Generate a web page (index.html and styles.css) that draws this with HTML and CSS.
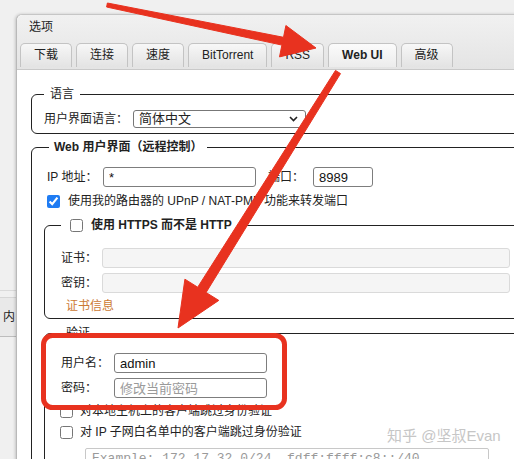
FILE: index.html
```html
<!DOCTYPE html>
<html lang="zh-CN">
<head>
    <meta charset="UTF-8">
    <meta name="viewport" content="width=device-width, initial-scale=1.0">
    <title>选项</title>
    <link rel="stylesheet" href="styles.css">
</head>
<body>
    <div class="desk">
        <div class="side">
            <div class="side-bar"><span>内</span></div>
        </div>

        <div class="win">
            <div class="head">
                <div class="win-title">选项</div>
                <div class="tabs">
                    <span class="tab">下载</span>
                    <span class="tab">连接</span>
                    <span class="tab">速度</span>
                    <span class="tab">BitTorrent</span>
                    <span class="tab">RSS</span>
                    <span class="tab on">Web UI</span>
                    <span class="tab">高级</span>
                </div>
            </div>

            <div class="pane">
                <fieldset class="box lang">
                    <legend>语言</legend>
                    <div class="row">
                        <label class="lbl-lang">用户界面语言：</label>
                        <div class="pick">
                            <span>简体中文</span>
                            <svg width="9" height="6" viewBox="0 0 9 6"><path d="M1 1l3.5 3.5L8 1" fill="none" stroke="#222" stroke-width="1.6"/></svg>
                        </div>
                    </div>
                </fieldset>

                <fieldset class="box web">
                    <legend>Web 用户界面（远程控制）</legend>
                    <div class="row ip-row">
                        <label class="lbl-ip">IP 地址：</label>
                        <input type="text" class="txt ip" value="*">
                        <label class="lbl-port">端口：</label>
                        <input type="text" class="txt port" value="8989">
                    </div>
                    <div class="row chk-row">
                        <input type="checkbox" checked>
                        <span>使用我的路由器的 UPnP / NAT-PMP 功能来转发端口</span>
                    </div>

                    <fieldset class="box sub https">
                        <legend><input type="checkbox"><b>使用 HTTPS 而不是 HTTP</b></legend>
                        <div class="row">
                            <label class="lbl-cert">证书：</label>
                            <input type="text" class="txt wide" disabled>
                        </div>
                        <div class="row gap">
                            <label class="lbl-cert">密钥：</label>
                            <input type="text" class="txt wide" disabled>
                        </div>
                        <a class="link" href="#">证书信息</a>
                    </fieldset>

                    <fieldset class="box sub auth">
                        <legend>验证</legend>
                        <div class="row">
                            <label class="lbl-user">用户名：</label>
                            <input type="text" class="txt ip" value="admin">
                        </div>
                        <div class="row gap">
                            <label class="lbl-user">密码：</label>
                            <input type="password" class="txt ip" placeholder="修改当前密码">
                        </div>
                        <div class="row opt">
                            <input type="checkbox">
                            <span>对本地主机上的客户端跳过身份验证</span>
                        </div>
                        <div class="row opt">
                            <input type="checkbox">
                            <span>对 IP 子网白名单中的客户端跳过身份验证</span>
                        </div>
                        <textarea class="subnets">Example: 172.17.32.0/24, fdff:ffff:c8::/40</textarea>
                    </fieldset>
                </fieldset>
            </div>
        </div>
    </div>

    <!-- red annotations drawn over the screenshot -->
    <svg class="marks" width="514" height="459" viewBox="0 0 514 459">
        <polygon fill="#e8321f" stroke="#e8321f" stroke-width="1" stroke-linejoin="round"
            points="107.4,3 283.5,37.3 285.9,25.5 316,48 279.5,56.9 281.9,45.1 106.6,7"/>
        <polygon fill="#e8321f" stroke="#e8321f" stroke-width="1" stroke-linejoin="round"
            points="340.5,73.6 206.1,292.5 218.8,300.4 178,328 184.9,279.2 197.7,287.2 335.5,70.4"/>
        <rect x="43.5" y="335.5" width="241" height="72" rx="9" fill="none" stroke="#e8321f" stroke-width="5"/>
    </svg>

    <div class="wm">知乎 @坚叔Evan</div>
</body>
</html>
```

FILE: styles.css
```css
body {
    margin: 0;
    height: 459px;
    overflow: hidden;
    position: relative;
    background: #f0f0f0;
    font: 12px/16px "Liberation Sans", "Noto Sans CJK SC", sans-serif;
    color: #222;
}

.desk {
    display: flex;
    padding-top: 14px;
}

.side {
    width: 16px;
    flex: none;
    overflow: hidden;
    padding-top: 276px;
}

.side-bar {
    border-top: 1px solid #dadada;
    margin-top: 0;
    padding-top: 6px;
}

.side-bar span {
    display: block;
    white-space: nowrap;
    height: 38px;
    line-height: 38px;
    padding-left: 3px;
    background: #e9e9e9;
    border-top: 1px solid #d6d6d6;
    border-bottom: 1px solid #bdbdbd;
}

.win {
    flex: none;
    width: 600px;
    height: 460px;
    background: #fff;
    border-top: 1px solid #c6c6c6;
    border-left: 1px solid #b9b9b9;
    border-top-left-radius: 6px;
    box-shadow: -1px 0 3px rgba(0, 0, 0, 0.18);
}

.head {
    background: linear-gradient(#f1f1f1, #e4e4e4);
    border-top-left-radius: 6px;
    border-bottom: 1px solid #c9c9c9;
}

.win-title {
    height: 25px;
    line-height: 25px;
    padding-left: 12px;
}

.tabs {
    display: flex;
    gap: 4px;
    padding: 3px 0 2px 3px;
}

.tab {
    height: 23px;
    line-height: 23px;
    padding: 0 13px;
    border: 1px solid #c3c3c3;
    border-bottom: none;
    border-radius: 5px 5px 0 0;
    background: linear-gradient(#f7f7f7, #e3e3e3);
}

.tab.on {
    font-weight: bold;
    background: linear-gradient(#fbfbfb, #ececec);
}

.pane {
    padding: 16px 0 0 14px;
}

.box {
    margin: 0;
    min-width: 0;
    border: 1px solid #222;
    border-radius: 6px;
    padding: 8px 12px 5px;
}

.box legend {
    padding: 0 6px;
    line-height: 16px;
}

.row {
    display: flex;
    align-items: center;
}

.row label {
    flex: none;
}

.lbl-lang { width: 89px; }
.lbl-ip { width: 56px; }
.lbl-port { width: 45px; margin-left: 12px; }
.lbl-cert { width: 41px; }
.lbl-user { width: 53px; }

.pick {
    width: 173px;
    height: 18px;
    box-sizing: border-box;
    border: 1px solid #777;
    border-radius: 3px;
    padding: 0 7px 0 5px;
    display: flex;
    align-items: center;
    justify-content: space-between;
    font-size: 13px;
}

.web {
    margin-top: 5px;
    padding: 12px 12px 8px;
}

.web > legend {
    font-weight: bold;
    margin-left: 5px;
    padding: 0 5px;
}

.ip-row,
.chk-row {
    padding-left: 3px;
}

.txt {
    height: 20px;
    box-sizing: border-box;
    border: 1px solid #7d7d7d;
    border-radius: 3px;
    padding: 0 5px;
    margin: 0;
    font: 13px "Liberation Sans", "Noto Sans CJK SC", sans-serif;
    color: #111;
}

.txt::placeholder {
    color: #9a9a9a;
}

.ip { width: 153px; }
.port { width: 60px; }

.wide {
    width: 408px;
    background: #f5f5f5;
    border-color: #dadada;
}

input[type="checkbox"] {
    width: 13px;
    height: 13px;
    margin: 0 8px 0 0;
    accent-color: #1f7cf3;
}

.chk-row {
    margin-top: 5px;
    height: 18px;
}

.sub {
    margin-top: 7px;
    padding: 15px 12px 4px 16px;
}

.sub > legend {
    padding: 0 5px;
    display: flex;
    align-items: center;
    height: 16px;
}

.https legend input {
    margin: 0 8px 0 4px;
}

.gap {
    margin-top: 5px;
}

.link {
    display: block;
    margin-top: 5px;
    padding-left: 5px;
    color: #cc7a35;
    text-decoration: none;
}

.auth {
    margin-top: 6px;
    padding: 12px 12px 8px 16px;
}

.opt {
    margin-top: 5px;
    height: 16px;
}

.opt input[type="checkbox"] {
    margin: 0 7px 0 -1px;
}

.subnets {
    display: block;
    margin: 8px 0 0 24px;
    width: 404px;
    height: 30px;
    box-sizing: border-box;
    resize: none;
    border: 1px solid #c8c8c8;
    border-radius: 2px;
    padding: 2px 6px;
    font: 13px/16px "Liberation Mono", monospace;
    color: #9a9a9a;
}

.marks {
    position: absolute;
    left: 0;
    top: 0;
    pointer-events: none;
}

.wm {
    position: absolute;
    left: 387px;
    top: 427px;
    font-size: 15px;
    line-height: 18px;
    color: #c6c6c6;
}
```
